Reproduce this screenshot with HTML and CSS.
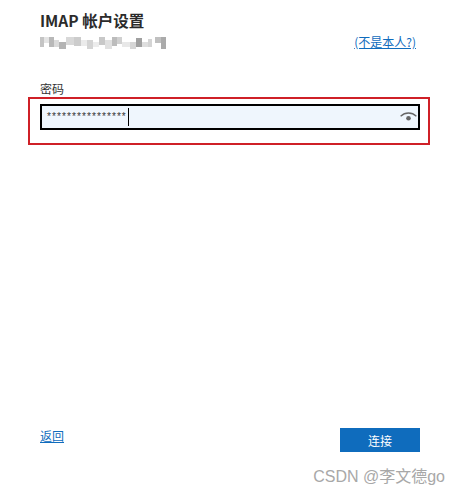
FILE: index.html
```html
<!DOCTYPE html>
<html lang="zh">
<head>
<meta charset="utf-8">
<title>IMAP 帐户设置</title>
<link rel="stylesheet" href="styles.css">
</head>
<body>
<main class="page">
  <section class="content">
    <h1 class="title">IMAP 帐户设置</h1>
    <div class="account-row">
      <svg class="mosaic" width="126" height="14" viewBox="0 0 126 14" aria-hidden="true" shape-rendering="crispEdges">
        <rect x="0" y="2" width="4" height="10" fill="#c4c4c4"/>
        <rect x="4" y="2" width="5" height="6" fill="#e4e4e4"/>
        <rect x="9" y="2" width="5" height="10" fill="#b8b8b8"/>
        <rect x="14" y="5" width="5" height="7" fill="#dadada"/>
        <rect x="19" y="7" width="7" height="7" fill="#b4b4b4"/>
        <rect x="26" y="2" width="8" height="8" fill="#d8d8d8"/>
        <rect x="34" y="2" width="7" height="9" fill="#cccccc"/>
        <rect x="41" y="5" width="6" height="6" fill="#ebebeb"/>
        <rect x="47" y="5" width="6" height="9" fill="#d4d4d4"/>
        <rect x="53" y="7" width="6" height="5" fill="#ececec"/>
        <rect x="59" y="2" width="6" height="8" fill="#c8c8c8"/>
        <rect x="65" y="5" width="7" height="9" fill="#e0e0e0"/>
        <rect x="72" y="2" width="5" height="9" fill="#bcbcbc"/>
        <rect x="77" y="2" width="5" height="7" fill="#d0d0d0"/>
        <rect x="82" y="7" width="8" height="5" fill="#e8e8e8"/>
        <rect x="90" y="7" width="6" height="7" fill="#d6d6d6"/>
        <rect x="96" y="3" width="6" height="9" fill="#a0a0a0"/>
        <rect x="102" y="7" width="6" height="5" fill="#dedede"/>
        <rect x="108" y="4" width="4" height="8" fill="#d4d4d4"/>
        <rect x="115" y="2" width="6" height="6" fill="#c0c0c0"/>
        <rect x="121" y="2" width="5" height="12" fill="#aaaaaa"/>
      </svg>
      <a class="link" href="#">(不是本人?)</a>
    </div>
    <label class="field-label" for="pw">密码</label>
    <div class="highlight">
      <div class="input">
        <span class="stars">****************</span>
        <span class="caret"></span>
        <svg class="eye" width="17" height="10" viewBox="0 0 17 10" aria-hidden="true">
          <path d="M.6 4.2C3 2 5.6 1 8.5 1s5.5 1 7.9 3.2" fill="none" stroke="#666" stroke-width="1.3"/>
          <circle cx="8.5" cy="6.2" r="2.3" fill="#666"/>
        </svg>
      </div>
    </div>
  </section>
  <footer class="actions">
    <a class="link back" href="#">返回</a>
    <button class="primary" type="button">连接</button>
  </footer>
  <div class="watermark">CSDN @李文德go</div>
</main>
</body>
</html>
```

FILE: styles.css
```css
* { box-sizing: border-box; }
html, body { margin: 0; background: #fff; }
body {
  font-family: "Liberation Sans", "Noto Sans CJK SC", sans-serif;
  color: #262626;
}
.page {
  position: relative;
  width: 460px;
  height: 496px;
  overflow: hidden;
  display: flex;
  flex-direction: column;
  justify-content: space-between;
  padding: 9px 40px 44px;
}
.title {
  margin: 0;
  font-family: "Noto Sans CJK SC", sans-serif;
  font-size: 15.5px;
  font-weight: 600;
  line-height: 22px;
  color: #2b2b2b;
}
.account-row {
  display: flex;
  justify-content: space-between;
  align-items: center;
  height: 20px;
  margin-top: 1px;
}
.link {
  font-family: "Noto Sans CJK SC", sans-serif;
  font-size: 12px;
  line-height: 18px;
  color: #0f6cbd;
  text-decoration: underline;
  padding-right: 4px;
}
.field-label {
  display: block;
  margin-top: 28px;
  font-family: "Noto Sans CJK SC", sans-serif;
  font-size: 12px;
  line-height: 18px;
  color: #333;
}
.highlight {
  margin: -1px -10px 0 -12px;
  padding: 5px 8px 13px 10px;
  border: 2px solid #cf2027;
}
.input {
  display: flex;
  align-items: center;
  height: 26px;
  padding: 0 1px 0 5px;
  border: 2px solid #000;
  background: #eff6fd;
}
.stars {
  font-family: "Liberation Sans", sans-serif;
  font-size: 10px;
  letter-spacing: 1.1px;
  line-height: 20px;
  color: #333;
}
.caret {
  width: 1px;
  height: 18px;
  margin-left: 1px;
  background: #000;
}
.eye { margin-left: auto; }
.actions {
  display: flex;
  justify-content: space-between;
  align-items: flex-start;
}
.back { margin-top: -1px; padding: 0; }
.primary {
  width: 80px;
  height: 24px;
  padding: 0;
  border: 0;
  border-radius: 0;
  background: #0f6cbd;
  color: #fff;
  font-family: "Noto Sans CJK SC", sans-serif;
  font-size: 12px;
}
.watermark {
  position: absolute;
  right: 15px;
  bottom: 10px;
  font-family: "Liberation Sans", "Noto Sans CJK SC", sans-serif;
  font-size: 16px;
  line-height: 18px;
  color: #a8a8a8;
}
```
